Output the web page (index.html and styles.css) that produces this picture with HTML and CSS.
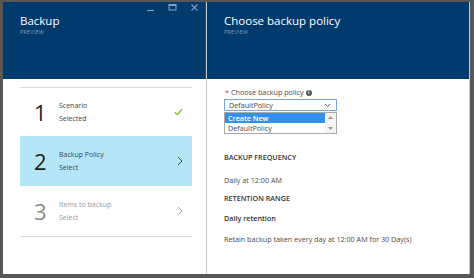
FILE: index.html
```html
<!DOCTYPE html>
<html lang="en">
  <head>
    <meta charset="utf-8" />
    <title>Backup</title>
    <link rel="stylesheet" href="styles.css">
  </head>
  <body>
    <div class="frame">
      <section class="blade blade-left">
        <header class="blade-head">
          <div class="win-controls">
            <span class="ctl">
              <svg width="9" height="9" viewBox="0 0 9 9"><path d="M1 7.5h7" stroke="currentColor" stroke-width="1.2"/></svg>
            </span>
            <span class="ctl">
              <svg width="9" height="9" viewBox="0 0 9 9"><rect x="1" y="1.5" width="7" height="5.5" fill="none" stroke="currentColor" stroke-width="1.1"/><path d="M1 2.3h7" stroke="currentColor" stroke-width="1.4"/></svg>
            </span>
            <span class="ctl">
              <svg width="9" height="9" viewBox="0 0 9 9"><path d="M1.5 1.5l6 6M7.5 1.5l-6 6" stroke="currentColor" stroke-width="1.1"/></svg>
            </span>
          </div>
          <h1 class="blade-title">Backup</h1>
          <div class="blade-sub">PREVIEW</div>
        </header>
        <div class="blade-body">
          <ul class="steps">
            <li class="step">
              <span class="step-num">1</span>
              <div class="step-text">
                <div>Scenario</div>
                <div>Selected</div>
              </div>
              <svg class="step-icon" width="9" height="8" viewBox="0 0 9 8"><path d="M1 4.2l2.4 2.4L8 1.2" fill="none" stroke="#7bb32e" stroke-width="1.3"/></svg>
            </li>
            <li class="step step-active">
              <span class="step-num">2</span>
              <div class="step-text">
                <div>Backup Policy</div>
                <div>Select</div>
              </div>
              <svg class="step-icon" width="6" height="10" viewBox="0 0 6 10"><path d="M1 1l4 4-4 4" fill="none" stroke="#444" stroke-width="1"/></svg>
            </li>
            <li class="step step-disabled">
              <span class="step-num">3</span>
              <div class="step-text">
                <div>Items to backup</div>
                <div>Select</div>
              </div>
              <svg class="step-icon" width="6" height="10" viewBox="0 0 6 10"><path d="M1 1l4 4-4 4" fill="none" stroke="#aaa" stroke-width="1"/></svg>
            </li>
          </ul>
        </div>
      </section>

      <section class="blade blade-right">
        <header class="blade-head">
          <div class="win-controls"></div>
          <h1 class="blade-title">Choose backup policy</h1>
          <div class="blade-sub">PREVIEW</div>
        </header>
        <div class="blade-body policy">
          <label class="field-label"><span class="req">*</span> Choose backup policy <span class="info">i</span></label>
          <div class="select">
            <span>DefaultPolicy</span>
            <svg width="7" height="5" viewBox="0 0 7 5"><path d="M1 1l2.5 2.5L6 1" fill="none" stroke="#555" stroke-width="1"/></svg>
          </div>
          <div class="dropdown">
            <div class="options">
              <div class="opt opt-selected">Create New</div>
              <div class="opt">DefaultPolicy</div>
            </div>
            <div class="scroll">
              <svg width="5" height="3" viewBox="0 0 5 3"><path d="M0 3L2.5 0 5 3z" fill="#999"/></svg>
              <svg width="5" height="3" viewBox="0 0 5 3"><path d="M0 0L2.5 3 5 0z" fill="#999"/></svg>
            </div>
          </div>

          <div class="section-head first">BACKUP FREQUENCY</div>
          <div class="line freq">Daily at 12:00 AM</div>
          <div class="section-head">RETENTION RANGE</div>
          <div class="line strong">Daily retention</div>
          <div class="line last">Retain backup taken every day at 12:00 AM for 30 Day(s)</div>
        </div>
      </section>
    </div>
  </body>
</html>
```

FILE: styles.css
```css
* {
  margin: 0;
  padding: 0;
  box-sizing: border-box;
}
html,
body {
  width: 474px;
  height: 278px;
  background: #585858;
  font-family: "Open Sans", "Noto Sans", sans-serif;
  overflow: hidden;
}
.frame {
  display: flex;
  height: 278px;
  padding: 2px 4px 4px 3px;
}
.blade {
  display: flex;
  flex-direction: column;
  background: #fff;
}
.blade-left {
  width: 204px;
  border-right: 1px solid #c9c9c9;
}
.blade-right {
  flex: 1;
  border-right: 1px solid #c9c9c9;
}
.blade-head {
  height: 77px;
  background: #013a6d;
  padding: 0 0 0 17px;
  color: #fff;
}
.blade-left .blade-head {
  border-right: 1px solid #1d4b7a;
}
.win-controls {
  display: flex;
  justify-content: flex-end;
  gap: 13px;
  height: 10px;
  padding: 1px 6px 0 0;
  color: #7d9dc3;
}
.ctl svg {
  display: block;
}
.blade-title {
  font-size: 11.5px;
  font-weight: 400;
  line-height: 14px;
  margin-top: 2px;
}
.blade-sub {
  font-size: 5.5px;
  color: #7f9cc0;
  letter-spacing: 0.2px;
  line-height: 9px;
}
.blade-body {
  flex: 1;
}

/* steps */
.steps {
  list-style: none;
  margin: 8px 14px 0 17px;
  border-top: 1px solid #dcdcdc;
  border-bottom: 1px solid #dcdcdc;
}
.step {
  display: flex;
  align-items: center;
  height: 50px;
  padding: 0 9px 0 14px;
  color: #1e1e1e;
}
.step:first-child {
  height: 48px;
}
.step-active {
  background: #b4e6f7;
}
.step-disabled {
  color: #8c8c8c;
}
.step-num {
  width: 25px;
  font-size: 22px;
  font-weight: 400;
  line-height: 1;
}
.step-text {
  flex: 1;
  font-size: 7px;
  line-height: 13px;
  color: #444;
}
.step-disabled .step-text {
  color: #999;
}
.step-icon {
  display: block;
}

/* policy */
.policy {
  padding: 9px 17px 0 17px;
  font-size: 7.2px;
  color: #4a4a4a;
}
.field-label {
  display: flex;
  align-items: center;
  gap: 2px;
  line-height: 9px;
  margin-left: 1px;
}
.req {
  color: #d32f4a;
}
.info {
  display: inline-flex;
  align-items: center;
  justify-content: center;
  width: 6px;
  height: 6px;
  border-radius: 50%;
  background: #555;
  color: #fff;
  font-size: 4.5px;
  font-weight: 700;
}
.select {
  display: flex;
  align-items: center;
  justify-content: space-between;
  width: 113px;
  height: 12px;
  margin-top: 2px;
  padding: 0 5px 0 4px;
  border: 1px solid #7aa8d8;
  background: #fff;
}
.dropdown {
  display: flex;
  width: 113px;
  height: 22px;
  margin-top: 1px;
  border: 1px solid #a9a9a9;
}
.options {
  flex: 1;
}
.opt {
  height: 10px;
  line-height: 10px;
  padding-left: 3px;
}
.opt-selected {
  background: #3390ef;
  color: #fff;
  font-weight: 600;
}
.scroll {
  width: 11px;
  display: flex;
  flex-direction: column;
  justify-content: space-between;
  align-items: center;
  padding: 3px 0;
  background: #f4f4f4;
}
.scroll svg {
  display: block;
}
.section-head {
  font-weight: 600;
  color: #333;
  line-height: 9px;
  margin-top: 9px;
}
.section-head.first {
  margin-top: 19px;
}
.line {
  line-height: 9px;
  margin-top: 11px;
}
.line.freq {
  margin-top: 14px;
}
.line.last {
  margin-top: 12px;
}
.line.strong {
  font-weight: 600;
  color: #333;
}
```
